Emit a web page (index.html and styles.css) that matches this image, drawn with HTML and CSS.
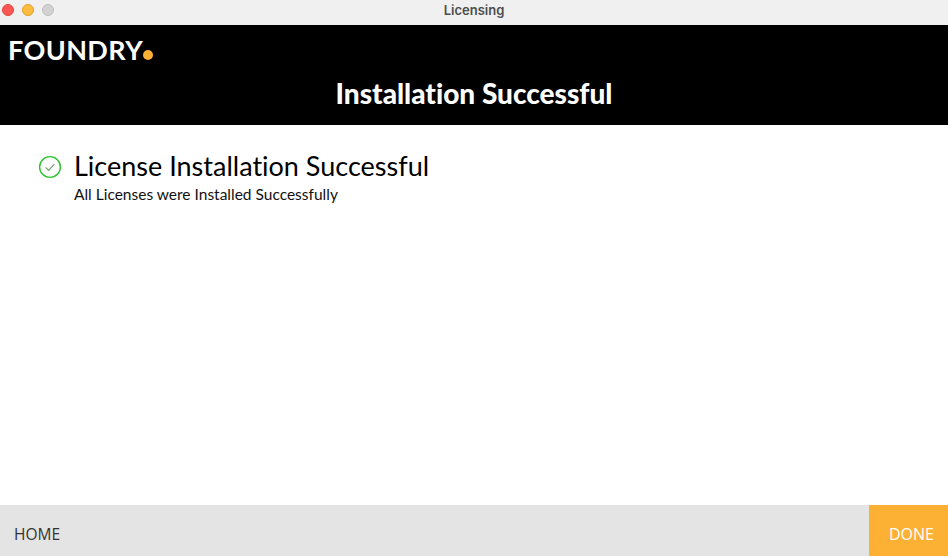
FILE: index.html
```html
<!DOCTYPE html>
<html lang="en">
<head>
<meta charset="utf-8">
<title>Licensing</title>
<link rel="stylesheet" href="styles.css">
</head>
<body>
<div class="window">
  <div class="titlebar">
    <div class="lights">
      <span class="light red"></span>
      <span class="light yellow"></span>
      <span class="light grey"></span>
    </div>
    <div class="window-title">Licensing</div>
  </div>
  <header class="banner">
    <div class="logo">FOUNDRY<span class="logo-dot"></span></div>
    <h1 class="banner-title">Installation Successful</h1>
  </header>
  <main class="content">
    <div class="result">
      <svg class="check" width="24" height="24" viewBox="0 0 24 24" aria-hidden="true">
        <circle cx="12" cy="12" r="10.4" fill="none" stroke="#2ec22e" stroke-width="1.4"/>
        <path d="M7.6 12.3l3 3.1 5.8-6.2" fill="none" stroke="#6f9f6f" stroke-width="1.2"/>
      </svg>
      <div class="result-text">
        <h2 class="result-title">License Installation Successful</h2>
        <p class="result-sub">All Licenses were Installed Successfully</p>
      </div>
    </div>
  </main>
  <footer class="footer">
    <div class="home">HOME</div>
    <div class="done">DONE</div>
  </footer>
</div>
</body>
</html>
```
FILE: styles.css
```css
* { box-sizing: border-box; }
html, body { margin: 0; padding: 0; }
body { width: 948px; height: 556px; overflow: hidden; background: #fff; font-family: "Lato", "Open Sans", sans-serif; font-variant-ligatures: none; }
.window { display: flex; flex-direction: column; height: 556px; }
.titlebar { height: 25px; flex: none; background: #f0f0f0; display: flex; justify-content: center; position: relative; }
.lights { position: absolute; left: 2px; top: 4px; display: flex; gap: 8px; }
.light { width: 12px; height: 12px; border-radius: 50%; display: block; }
.red { background: #fc5753; border: 1px solid #e0443e; }
.yellow { background: #fdbc40; border: 1px solid #dea123; }
.grey { background: #d2d2d2; border: 1px solid #bdbdbd; }
.window-title { font-family: "Inter", sans-serif; font-size: 13px; font-weight: 600; color: #4c4c4c; line-height: 21px; }
.banner { height: 100px; flex: none; background: #000; color: #fff; display: flex; flex-direction: column; }
.logo { font-family: "Lato", sans-serif; font-size: 27px; font-weight: 700; letter-spacing: 0.4px; line-height: 32px; padding: 9px 0 0 8px; display: flex; align-items: baseline; }
.logo-dot { width: 10px; height: 10px; border-radius: 50%; background: #fdb134; }
.banner-title { margin: 10px 0 0; font-size: 28px; font-weight: 900; line-height: 34px; text-align: center; letter-spacing: 0; }
.content { flex: 1; padding: 25px 0 0 38px; }
.result { display: flex; gap: 12px; }
.check { flex: none; margin-top: 5px; }
.result-title { margin: 0; font-size: 27px; font-weight: 400; line-height: 31px; color: #000; }
.result-sub { margin: 4px 0 0; font-size: 15.5px; line-height: 18px; color: #111; }
.footer { height: 51px; flex: none; background: #e4e4e4; display: flex; justify-content: space-between; font-family: "Open Sans", sans-serif; font-size: 16px; }
.home { padding: 0 14px; line-height: 59px; color: #333; font-size: 15.5px; }
.done { width: 79px; background: #fdb134; color: #fff; line-height: 59px; padding-left: 20px; }
```
